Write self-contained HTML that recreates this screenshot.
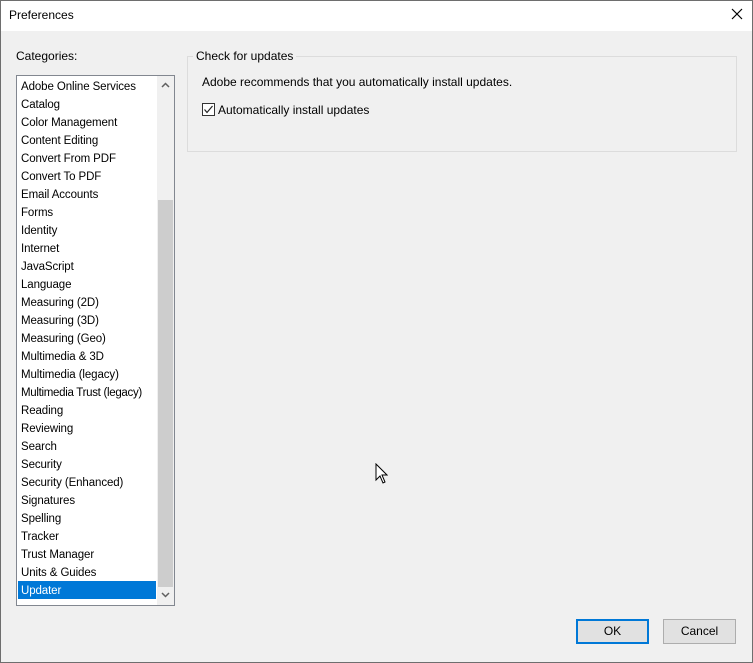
<!DOCTYPE html>
<html><head><style>
*{box-sizing:border-box}
body{margin:0;width:753px;height:663px;overflow:hidden;font-family:"Liberation Sans",sans-serif;font-size:12px;color:#000;background:#f0f0f0;position:relative}
.win{position:absolute;left:0;top:0;width:753px;height:663px;border:1px solid #6e6e6e}
.title{position:absolute;left:1px;top:1px;width:751px;height:30px;background:#fff}
.abs{position:absolute;white-space:nowrap}
.list{position:absolute;left:16px;top:75px;width:159px;height:531px;background:#fff;border:1px solid #828790}
.item{position:absolute;left:1px;width:138px;height:18px;line-height:20px;padding-left:3px;white-space:nowrap;overflow:hidden;font-size:11.5px;letter-spacing:-0.1px}
.sb{position:absolute;left:140px;top:0;width:17px;height:529px;background:#f0f0f0}
.thumb{position:absolute;left:1px;top:124px;width:15px;height:387px;background:#cdcdcd}
.group{position:absolute;left:187px;top:56px;width:550px;height:96px;border:1px solid #dcdcdc}
.btn{position:absolute;top:619px;height:25px;background:#e1e1e1;border:1px solid #adadad;text-align:center;line-height:23px}
</style></head><body>
<div class="win"></div>
<div class="title"></div>
<div class="abs" style="left:9px;top:8px;font-size:12px">Preferences</div>
<svg class="abs" style="left:731px;top:8px" width="12" height="12"><path d="M1 1L11 11M11 1L1 11" stroke="#000" stroke-width="1.2"/></svg>
<div class="abs" style="left:16px;top:49px">Categories:</div>
<div class="list">
<div class="item" style="top:1px">Adobe Online Services</div>
<div class="item" style="top:19px">Catalog</div>
<div class="item" style="top:37px">Color Management</div>
<div class="item" style="top:55px">Content Editing</div>
<div class="item" style="top:73px">Convert From PDF</div>
<div class="item" style="top:91px">Convert To PDF</div>
<div class="item" style="top:109px">Email Accounts</div>
<div class="item" style="top:127px">Forms</div>
<div class="item" style="top:145px">Identity</div>
<div class="item" style="top:163px">Internet</div>
<div class="item" style="top:181px">JavaScript</div>
<div class="item" style="top:199px">Language</div>
<div class="item" style="top:217px">Measuring (2D)</div>
<div class="item" style="top:235px">Measuring (3D)</div>
<div class="item" style="top:253px">Measuring (Geo)</div>
<div class="item" style="top:271px">Multimedia &amp; 3D</div>
<div class="item" style="top:289px">Multimedia (legacy)</div>
<div class="item" style="top:307px;letter-spacing:-0.3px">Multimedia Trust (legacy)</div>
<div class="item" style="top:325px">Reading</div>
<div class="item" style="top:343px">Reviewing</div>
<div class="item" style="top:361px">Search</div>
<div class="item" style="top:379px">Security</div>
<div class="item" style="top:397px">Security (Enhanced)</div>
<div class="item" style="top:415px">Signatures</div>
<div class="item" style="top:433px">Spelling</div>
<div class="item" style="top:451px">Tracker</div>
<div class="item" style="top:469px">Trust Manager</div>
<div class="item" style="top:487px">Units &amp; Guides</div>
<div class="item" style="top:505px;background:#0078d7;color:#fff">Updater</div>
<div class="sb"><div class="thumb"></div>
<svg class="abs" style="left:4px;top:6px" width="9" height="6"><path d="M1 5L4.5 1.5L8 5" stroke="#606060" stroke-width="1.5" fill="none"/></svg>
<svg class="abs" style="left:4px;top:516px" width="9" height="6"><path d="M1 1L4.5 4.5L8 1" stroke="#606060" stroke-width="1.5" fill="none"/></svg>
</div>
</div>
<div class="group"></div>
<div class="abs" style="left:193px;top:49px;background:#f0f0f0;padding:0 3px">Check for updates</div>
<div class="abs" style="left:202px;top:75px">Adobe recommends that you automatically install updates.</div>
<div class="abs" style="left:202px;top:103px;width:13px;height:13px;background:#fff;border:1px solid #333"></div>
<svg class="abs" style="left:203px;top:104px" width="11" height="11"><path d="M1.5 5.5L4 8.5L9.5 2" stroke="#222" stroke-width="1.2" fill="none"/></svg>
<div class="abs" style="left:218px;top:103px">Automatically install updates</div>
<svg class="abs" style="left:375px;top:463px" width="13" height="21"><path d="M1 1L1 17L5 13L8 20L10 19L7 12L12 12Z" fill="#fff" stroke="#000" stroke-width="1"/></svg>
<div class="btn" style="left:576px;width:73px;border:2px solid #0078d7;line-height:21px">OK</div>
<div class="btn" style="left:663px;width:73px">Cancel</div>
</body></html>
